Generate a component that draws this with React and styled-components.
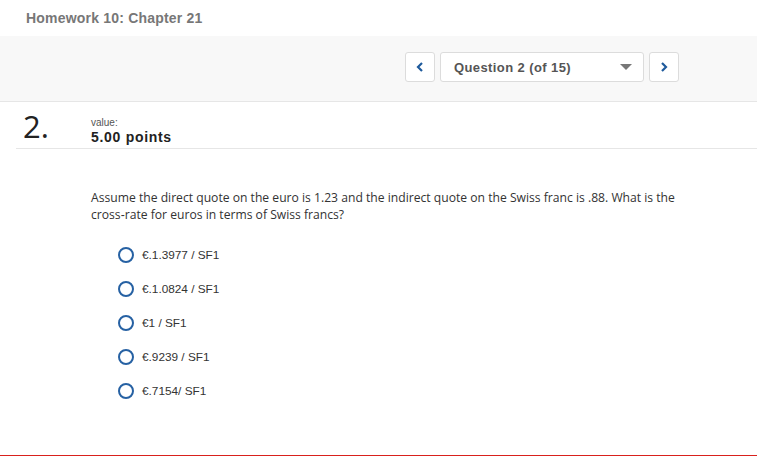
import React from 'react'
import styled, { createGlobalStyle } from 'styled-components'

const Global = createGlobalStyle`
  html, body { margin: 0; padding: 0; background: #fff; }
  body { font-family: 'Liberation Sans', Arial, sans-serif; }
`

const Page = styled.div`
  width: 757px;
  height: 456px;
  box-sizing: border-box;
  border-bottom: 1px solid #d9211d;
  display: flex;
  flex-direction: column;
  overflow: hidden;
`

const Title = styled.h1`
  margin: 0;
  height: 36px;
  box-sizing: border-box;
  padding: 10px 0 0 26px;
  font-size: 14px;
  font-weight: 700;
  letter-spacing: 0.2px;
  color: #777;
`

const NavBand = styled.div`
  height: 66px;
  box-sizing: border-box;
  background: #f8f8f8;
  border-bottom: 1px solid #e6e6e6;
  display: flex;
  justify-content: flex-end;
  align-items: flex-start;
  gap: 5px;
  padding: 16px 78px 0 0;
`

const NavButton = styled.button`
  width: 30px;
  height: 30px;
  padding: 0;
  border: 1px solid #dcdcdc;
  border-radius: 3px;
  background: #fff;
  display: flex;
  align-items: center;
  justify-content: center;
`

const Select = styled.div`
  width: 204px;
  height: 30px;
  box-sizing: border-box;
  border: 1px solid #dcdcdc;
  border-radius: 3px;
  background: #fff;
  display: flex;
  align-items: center;
  justify-content: space-between;
  padding: 0 11px 0 13px;
  font-size: 13px;
  font-weight: 700;
  letter-spacing: 0.4px;
  color: #555;
`

const Caret = styled.span`
  width: 0;
  height: 0;
  border-left: 6px solid transparent;
  border-right: 6px solid transparent;
  border-top: 6px solid #777;
`

const Header = styled.div`
  margin-left: 16px;
  height: 47px;
  box-sizing: border-box;
  border-bottom: 1px solid #e6e6e6;
  display: flex;
  align-items: flex-start;
  padding-top: 7px;
`

const Number = styled.div`
  width: 75px;
  padding-left: 7px;
  box-sizing: border-box;
  font-family: 'Open Sans', 'Liberation Sans', sans-serif;
  font-size: 31px;
  line-height: 34px;
  color: #222;
`

const Value = styled.div`
  padding-top: 8px;
  display: flex;
  flex-direction: column;
`

const ValueLabel = styled.span`
  font-size: 10px;
  line-height: 12px;
  color: #555;
`

const Points = styled.span`
  font-size: 14px;
  font-weight: 700;
  letter-spacing: 0.7px;
  line-height: 16px;
  color: #222;
`

const Body = styled.div`
  padding: 40px 60px 0 91px;
`

const Question = styled.p`
  margin: 0 0 21px;
  font-family: 'Open Sans', 'Liberation Sans', sans-serif;
  font-size: 12.15px;
  line-height: 17px;
  color: #333;
`

const Options = styled.div`
  display: flex;
  flex-direction: column;
  gap: 13px;
  padding-left: 27px;
`

const Option = styled.label`
  display: flex;
  align-items: center;
  gap: 8px;
  height: 21px;
  font-size: 11.8px;
  color: #333;
`

const Radio = styled.span`
  width: 16px;
  height: 16px;
  box-sizing: border-box;
  border: 2.5px solid #2661a3;
  border-radius: 50%;
  background: #fff;
`

const Chevron = ({ dir }) => (
  <svg width="8" height="10" viewBox="0 0 8 10">
    <path
      d={dir === 'left' ? 'M6 1 L2 5 L6 9' : 'M2 1 L6 5 L2 9'}
      fill="none"
      stroke="#1e5a9c"
      strokeWidth="2.2"
    />
  </svg>
)

const answers = [
  '€.1.3977 / SF1',
  '€.1.0824 / SF1',
  '€1 / SF1',
  '€.9239 / SF1',
  '€.7154/ SF1',
]

export default function App() {
  return (
    <Page>
      <Global />
      <Title>Homework 10: Chapter 21</Title>
      <NavBand>
        <NavButton><Chevron dir="left" /></NavButton>
        <Select>
          <span>Question 2 (of 15)</span>
          <Caret />
        </Select>
        <NavButton><Chevron dir="right" /></NavButton>
      </NavBand>
      <Header>
        <Number>2.</Number>
        <Value>
          <ValueLabel>value:</ValueLabel>
          <Points>5.00 points</Points>
        </Value>
      </Header>
      <Body>
        <Question>
          Assume the direct quote on the euro is 1.23 and the indirect quote on the Swiss franc is .88. What is the cross&#8209;rate for euros in terms of Swiss francs?
        </Question>
        <Options>
          {answers.map(a => (
            <Option key={a}>
              <Radio />
              {a}
            </Option>
          ))}
        </Options>
      </Body>
    </Page>
  )
}
